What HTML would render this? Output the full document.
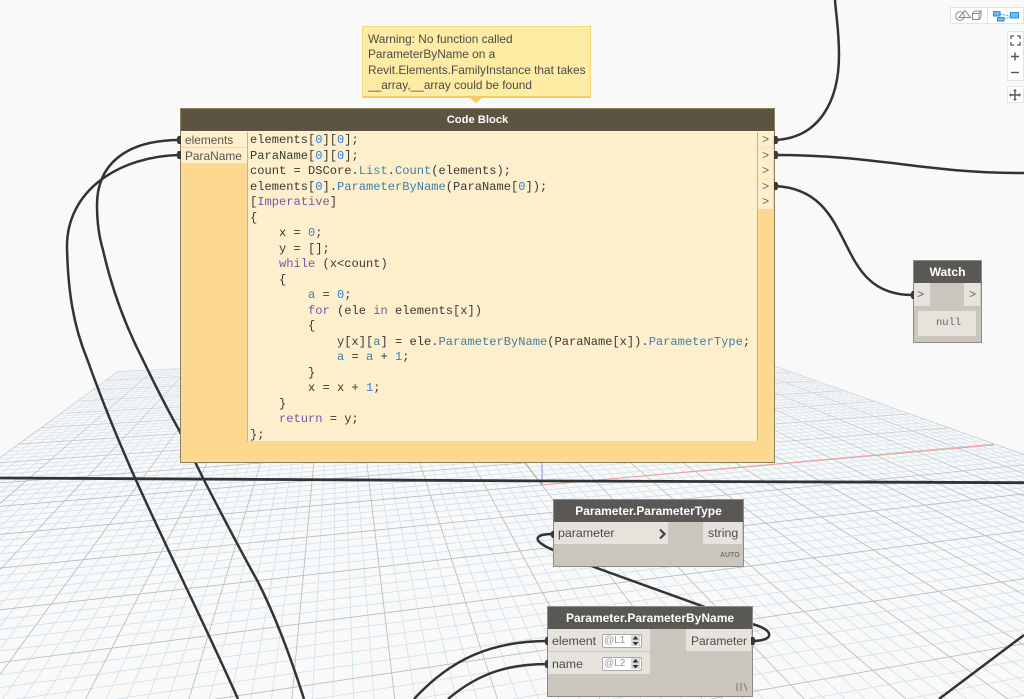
<!DOCTYPE html>
<html><head><meta charset="utf-8"><style>
html,body{margin:0;padding:0;background:#f9f9f9;width:1024px;height:699px;overflow:hidden}
#r{position:relative;width:1024px;height:699px;overflow:hidden;background:#f9f9f9;font-family:"Liberation Sans",sans-serif}
svg{position:absolute;left:0;top:0}
.a{position:absolute;white-space:nowrap}
.hd{position:absolute;left:0;right:0;top:0;color:#fff;font-weight:bold;text-align:center}
pre{position:absolute;left:250px;top:133px;margin:0;font:12.08px/15.5px "Liberation Mono",monospace;color:#383838;white-space:pre}
.n{color:#2f80e0}.k{color:#7f52a8}.c{color:#3f7ea6}.t{color:#3a8c96}
.gt{position:absolute;font:12px "Liberation Mono",monospace;color:#666}
.p{position:absolute;background:#e6e3dd}
.lb{position:absolute;font-size:12.5px;color:#4a4a4a;white-space:nowrap}
.box{position:absolute;background:#fff;border:1px solid #aaa;border-radius:2px;width:38px;height:12px}
.node{position:absolute;background:#cac5bd;border:1px solid #8f8c86;box-sizing:border-box}
</style></head><body><div id="r">
<svg id="g" width="1024" height="699"></svg>
<svg width="1024" height="699" fill="none" stroke="#333" stroke-width="2.5">
<path d="M0,478 L560,481 L1024,482.7" stroke-width="2.8"/>
<path d="M180,155 C120,156 66,190 67,248 C68,290 73,325 87.5,360 C100,395 118,440 135,478 C165,545 205,625 238,699"/>
<path d="M180,140 C125,140 97,165 97,205 C97,225 100,240 103,250 C112,290 125,325 143,360 C155,385 165,405 179,430 C188,447 195,462 204,480 C222,515 240,550 257,580 C275,615 290,655 304,699"/>
<path d="M775,140 C820,138 839,100 839,55 C839,30 836,15 835,0"/>
<path d="M775,155 C880,155 920,173 1024,173"/>
<path d="M775,186 C860,190 830,295 912,295"/>
<path d="M752,641 C775,641 775,630 752,624 L594,567 L553,550 C530,540 535,534 553,534"/>
<path d="M414,699 C450,660 490,641 548,641"/>
<path d="M448,699 C480,672 510,664 548,664"/>
<path d="M939,699 L1024,635"/>
</svg>

<!-- warning -->
<div class="a" style="left:362px;top:26px;width:229px;height:72px;box-sizing:border-box;background:#feeca4;border:1px solid #f6d67a;border-bottom:2px solid #f7cb63"></div>
<svg width="1024" height="699"><path d="M470,98 L482,98 L476,103 Z" fill="#f7cb63"/></svg>
<div class="a" style="left:368px;top:31.5px;font-size:11.86px;line-height:15.5px;color:#4a4a4a">Warning: No function called<br>ParameterByName on a<br>Revit.Elements.FamilyInstance that takes<br>__array,__array could be found</div>

<!-- code block -->
<div class="a" style="left:180px;top:108px;width:595px;height:355px;box-sizing:border-box;background:#fdd891;border:1px solid #8c7f5e">
  <div class="hd" style="height:22px;background:#5c5340;font-size:11.2px;line-height:23px">Code Block</div>
</div>
<div class="a" style="left:181px;top:131px;width:593px;height:1px;background:#fff3d8"></div>
<div class="a" style="left:181px;top:132px;width:66px;height:15px;background:#feeecb"></div>
<div class="a" style="left:181px;top:148px;width:66px;height:15px;background:#feeecb"></div>
<div class="lb" style="left:185px;top:133px;font-size:11.9px;color:#555">elements</div>
<div class="lb" style="left:185px;top:149px;font-size:11.9px;color:#555">ParaName</div>
<div class="a" style="left:247px;top:132px;width:511px;height:309px;box-sizing:border-box;background:#feefcc;border-left:1px solid #b9b2a0;border-right:1px solid #b9b2a0"></div>
<pre>elements[<span class="n">0</span>][<span class="n">0</span>];
ParaName[<span class="n">0</span>][<span class="n">0</span>];
count = DSCore.<span class="t">List</span>.<span class="c">Count</span>(elements);
elements[<span class="n">0</span>].<span class="c">ParameterByName</span>(ParaName[<span class="n">0</span>]);
[<span class="k">Imperative</span>]
{
    x = <span class="n">0</span>;
    y = [];
    <span class="k">while</span> (x&lt;count)
    {
        <span class="c">a</span> = <span class="n">0</span>;
        <span class="k">for</span> (ele <span class="k">in</span> elements[x])
        {
            y[x][<span class="c">a</span>] = ele.<span class="c">ParameterByName</span>(ParaName[x]).<span class="c">ParameterType</span>;
            <span class="c">a</span> = <span class="c">a</span> + <span class="n">1</span>;
        }
        x = x + <span class="n">1</span>;
    }
    <span class="k">return</span> = y;
};</pre>
<div class="a" style="left:758px;top:132px;width:15px;height:77px;background:#feefcc"></div>
<div class="a" style="left:758px;top:147px;width:15px;height:1px;background:#fde3ae"></div>
<div class="a" style="left:758px;top:178px;width:15px;height:1px;background:#fde3ae"></div>
<div class="gt" style="left:762px;top:133px">&gt;</div>
<div class="gt" style="left:762px;top:149px">&gt;</div>
<div class="gt" style="left:762px;top:164px">&gt;</div>
<div class="gt" style="left:762px;top:180px">&gt;</div>
<div class="gt" style="left:762px;top:195px">&gt;</div>

<!-- watch -->
<div class="node" style="left:913px;top:260px;width:69px;height:83px">
  <div class="hd" style="height:22px;background:#5a5854;font-size:12.2px;line-height:23px">Watch</div>
</div>
<div class="p" style="left:914px;top:283px;width:16px;height:23px"></div>
<div class="p" style="left:964px;top:283px;width:16px;height:23px"></div>
<div class="gt" style="left:917px;top:288px">&gt;</div>
<div class="gt" style="left:969px;top:288px">&gt;</div>
<div class="p" style="left:918px;top:311px;width:58px;height:25px"></div>
<div class="a" style="left:936px;top:317px;font:10.5px 'Liberation Mono',monospace;color:#666">null</div>

<!-- parameter type -->
<div class="node" style="left:553px;top:499px;width:191px;height:68px">
  <div class="hd" style="height:22px;background:#5a5854;font-size:11.95px;line-height:23px">Parameter.ParameterType</div>
</div>
<div class="p" style="left:554px;top:522px;width:114px;height:22px"></div>
<div class="p" style="left:703px;top:522px;width:39px;height:22px"></div>
<div class="lb" style="left:558px;top:526px;font-size:12.4px">parameter</div>
<div class="lb" style="left:708px;top:526px;font-size:12.4px">string</div>
<svg width="1024" height="699" fill="none" stroke="#444" stroke-width="2.2"><path d="M660,529.5 L664.5,534 L660,538.5"/><path d="M644.5,636.5 L649,641 L644.5,645.5"/><path d="M644.5,658.5 L649,663 L644.5,667.5"/></svg>
<div class="lb" style="left:720px;top:552px;font-size:7px;font-weight:bold;color:#777">AUTO</div>

<!-- parameter by name -->
<div class="node" style="left:547px;top:606px;width:206px;height:91px">
  <div class="hd" style="height:22px;background:#5a5854;font-size:12px;line-height:23px">Parameter.ParameterByName</div>
</div>
<div class="p" style="left:548px;top:629px;width:102px;height:22px"></div>
<div class="p" style="left:548px;top:652px;width:102px;height:22px"></div>
<div class="p" style="left:686px;top:629px;width:65px;height:22px"></div>
<div class="lb" style="left:552px;top:634px;font-size:12.4px">element</div>
<div class="lb" style="left:552px;top:657px;font-size:12.4px">name</div>
<div class="lb" style="left:691px;top:634px;font-size:12px">Parameter</div>
<div class="box" style="left:602px;top:634px"></div>
<div class="box" style="left:602px;top:657px"></div>
<div class="lb" style="left:604px;top:635px;font-size:10px;color:#999">@L1</div>
<div class="lb" style="left:604px;top:658px;font-size:10px;color:#999">@L2</div>
<svg width="1024" height="699" stroke="none">
<rect x="631" y="635" width="9" height="11" fill="#dcdad6"/><rect x="631" y="658" width="9" height="11" fill="#dcdad6"/>
<path d="M635.5,636 l3,3.5 h-6z M635.5,645.5 l3,-3.5 h-6z M635.5,659 l3,3.5 h-6z M635.5,668.5 l3,-3.5 h-6z" fill="#333"/>
<path d="M737,683 v8 M741,683 v8 M744,683 l3,8" stroke="#8a8780" stroke-width="1.2" fill="none"/>
<g fill="#3a3a3a">
<path d="M176,140 l2,-4 h3 v8 h-3z M176,155 l2,-4 h3 v8 h-3z"/>
<path d="M779,140 l-2,-4 h-3 v8 h3z M779,155 l-2,-4 h-3 v8 h3z M779,186 l-2,-4 h-3 v8 h3z"/>
<path d="M910,295 l2,-4 h2 v8 h-2z"/>
<path d="M550,534 l2,-3 h2 v7 h-2z"/>
<path d="M544,641 l2,-4 h2 v8 h-2z M544,664 l2,-4 h2 v8 h-2z"/>
<path d="M756,641 l-2,-4 h-3 v8 h3z"/>
</g>
</svg>

<!-- top-right UI -->
<div class="a" style="left:950px;top:7px;width:74px;height:17px;background:#fff;border:1px solid #e4e4e4;box-sizing:border-box"></div>
<div class="a" style="left:987px;top:7px;width:1px;height:17px;background:#e4e4e4"></div>
<div class="a" style="left:1007px;top:31px;width:17px;height:50px;background:#fff;border:1px solid #e4e4e4;box-sizing:border-box"></div>
<div class="a" style="left:1007px;top:86px;width:17px;height:17px;background:#fff;border:1px solid #e4e4e4;box-sizing:border-box"></div>
<svg width="1024" height="699" fill="none" stroke="#888" stroke-width="1">
<circle cx="960" cy="16" r="4.3"/><path d="M959,17.5 L965,10.5 L970.5,17.5 Z"/><path d="M972.5,13.5 h6.5 v6 h-6.5z M972.5,13.5 l2,-2.5 h6.5 l-2,2.5 M979,19.5 l2,-2.5 v-6"/>
<path d="M1000,14 L1010,16 M1004,19 L1010,17" stroke="#3fa0ee" stroke-dasharray="2 1"/>
<g fill="#6bbcf7" stroke="#2e93e6"><rect x="993.5" y="11.5" width="6.5" height="4.5"/><rect x="997.5" y="17.5" width="6.5" height="3.5"/><rect x="1010.5" y="12.5" width="8" height="5.5"/></g>
<g stroke="#555" stroke-width="1.4">
<path d="M1011,39 v-3 h3 M1017,36 h3 v3 M1020,42 v3 h-3 M1014,45 h-3 v-3" stroke-width="1.2"/>
<path d="M1011,56.5 h8 M1015,52.5 v8"/><path d="M1011,72.5 h8"/>
<path d="M1015,90 v10 M1010,95 h10"/></g>
<path d="M1015,89 l2,2 h-4z M1015,101 l2,-2 h-4z M1009,95 l2,-2 v4z M1021,95 l-2,-2 v4z" fill="#555" stroke="none"/>
</svg>

<script>
(function(){
var a=.1879,b=.88,V2=[3400,225],V1=[337,211],O=[542,485],W=1024,Ht=699;
function H(u,v){var w=a*u+b*v+1;return [(a*u*V2[0]+b*v*V1[0]+O[0])/w,(a*u*V2[1]+b*v*V1[1]+O[1])/w];}
function clip(p,q){
 var t0=0,t1=1,dx=q[0]-p[0],dy=q[1]-p[1];
 var P=[-dx,dx,-dy,dy],Q=[p[0],W-p[0],p[1],Ht-p[1]];
 for(var k=0;k<4;k++){
  if(P[k]===0){if(Q[k]<0)return '';}
  else{var r=Q[k]/P[k];
   if(P[k]<0){if(r>t0)t0=r;}else{if(r<t1)t1=r;}}
 }
 if(t0>=t1)return '';
 return 'M'+(p[0]+t0*dx).toFixed(1)+','+(p[1]+t0*dy).toFixed(1)+'L'+(p[0]+t1*dx).toFixed(1)+','+(p[1]+t1*dy).toFixed(1);
}
var minor='',major='',N=50,i;
for(i=-N;i<=N;i++){
 var t=i/N,mj=(i%5===0);
 var v0=Math.max(-1,(.03-1-a*t)/b);
 var d1=clip(H(t,v0),H(t,1));
 var u0=Math.max(-1,(.03-1-b*t)/a);
 var d2=clip(H(u0,t),H(1,t));
 if(mj)major+=d1+d2;else minor+=d1+d2;
}
var s='<defs><linearGradient id="f" gradientUnits="userSpaceOnUse" x1="0" y1="360" x2="0" y2="500"><stop offset="0" stop-color="#f9f9f9" stop-opacity=".5"/><stop offset="1" stop-color="#f9f9f9" stop-opacity="0"/></linearGradient></defs>'+
'<path d="'+minor+'" fill="none" stroke="#d0e1ec" stroke-width=".85"/>'+
'<path d="'+major+'" fill="none" stroke="#b4bdc2" stroke-width=".85"/>'+
'<rect x="0" y="360" width="1024" height="140" fill="url(#f)"/>'+
'<path d="M542,485 L994,445" stroke="#f59c9c" stroke-width="1" fill="none"/>'+
'<path d="M542,485 L525,463" stroke="#7fbf7f" stroke-width="1" fill="none"/>'+
'<path d="M542,485 V463" stroke="#8f8ff0" stroke-width="1" fill="none"/>';
document.getElementById('g').innerHTML=s;
})();
</script>
</div></body></html>
